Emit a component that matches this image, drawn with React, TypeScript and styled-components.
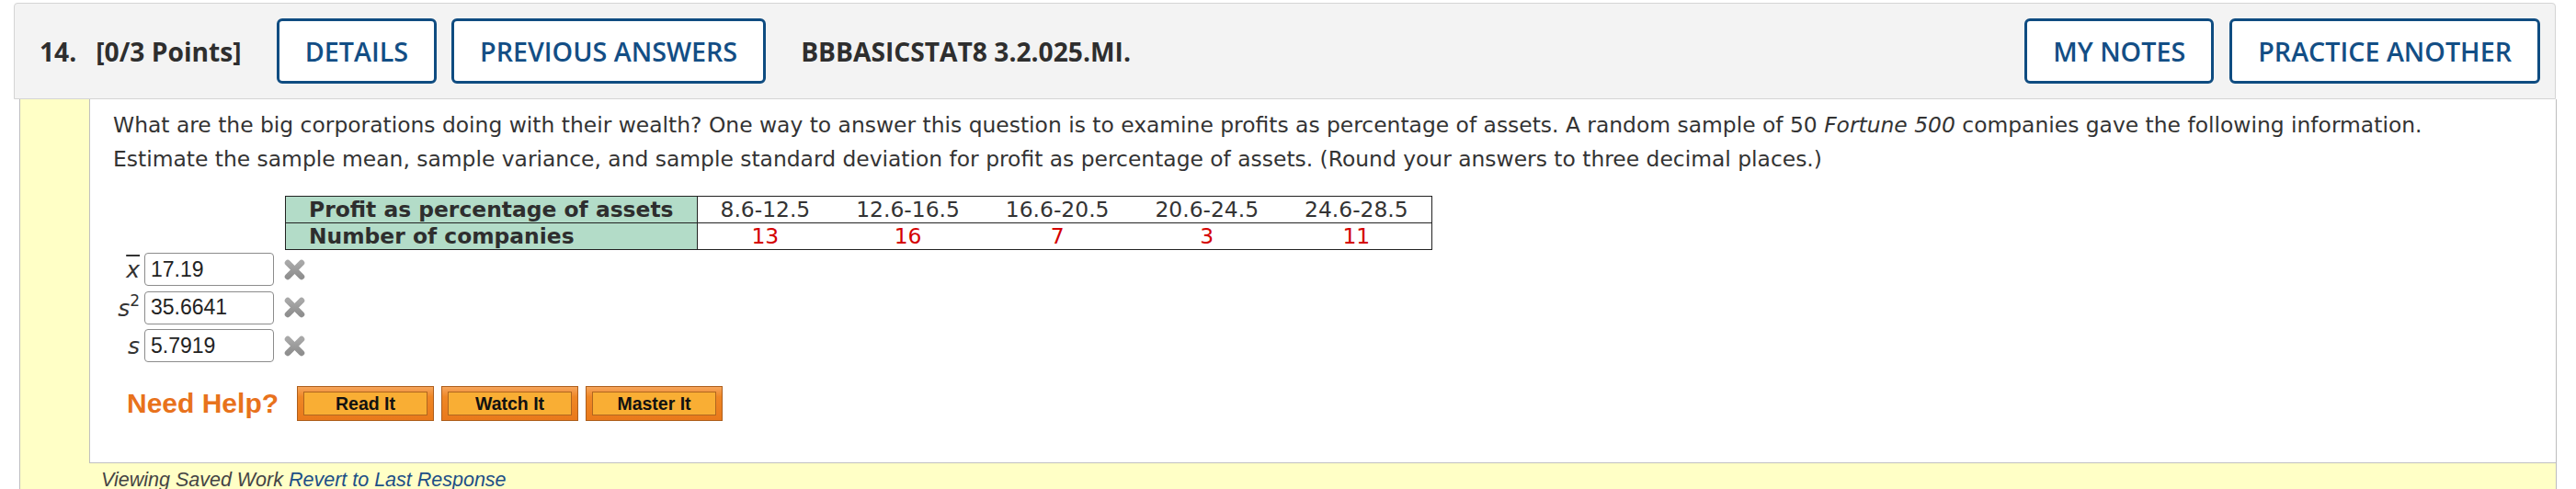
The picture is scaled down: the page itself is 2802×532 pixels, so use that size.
import React from 'react';
import styled, { createGlobalStyle } from 'styled-components';

const GlobalStyle = createGlobalStyle`
  html, body {
    margin: 0;
    padding: 0;
    background: #ffffff;
  }
`;

const Page = styled.div`
  width: 2765px;
  padding: 3px 0 0 15px;
`;

const Header = styled.header`
  display: flex;
  align-items: center;
  height: 105px;
  box-sizing: border-box;
  padding: 0 16px 0 27px;
  background: #f3f3f3;
  border: 1px solid #d4d4d4;
  border-radius: 4px 4px 0 0;
  font-family: "Open Sans", "Liberation Sans", sans-serif;
`;

const HeaderText = styled.span<{ $gap?: number }>`
  margin-left: ${({ $gap }) => $gap ?? 0}px;
  font-size: 28.2px;
  font-weight: 700;
  color: #2e2e2e;
  white-space: nowrap;
`;

const OutlineButton = styled.button<{ $gap?: number }>`
  height: 71px;
  margin-left: ${({ $gap }) => $gap ?? 0}px;
  padding: 0 28px;
  box-sizing: border-box;
  background: #ffffff;
  border: 3px solid #0f4c81;
  border-radius: 6px;
  font-family: "Open Sans", "Liberation Sans", sans-serif;
  font-size: 28.7px;
  font-weight: 600;
  color: #134e85;
  white-space: nowrap;
  cursor: pointer;
`;

const Spacer = styled.div`
  flex: 1;
`;

const Body = styled.div`
  width: 2760px;
  margin-left: 6px;
  box-sizing: border-box;
  padding-left: 75px;
  background: #ffffc6;
  border-left: 1px solid #bdbdbd;
  border-right: 1px solid #bdbdbd;
`;

const Card = styled.div`
  background: #ffffff;
  border-left: 1px solid #c0c0c0;
  border-bottom: 1px solid #c0c0c0;
  padding: 10px 40px 45px 25px;
  font-family: "DejaVu Sans", Verdana, sans-serif;
  color: #333333;
`;

const Question = styled.p`
  margin: 0;
  font-size: 23.4px;
  line-height: 36.5px;
`;

const DataTable = styled.table`
  margin: 22px 0 0 187px;
  border-collapse: collapse;
  font-size: 23.4px;
  line-height: 28px;
`;

const LabelCell = styled.th`
  padding: 0 25px;
  text-align: left;
  font-weight: 700;
  color: #2e2e2e;
  background: #b3dcc8;
  border: 1px solid #222222;
  white-space: nowrap;
`;

const ValueCell = styled.td<{ $red?: boolean }>`
  padding: 0 25px;
  text-align: center;
  color: ${({ $red }) => ($red ? '#d40000' : '#333333')};
  border-top: 1px solid #222222;
  border-bottom: 1px solid #222222;
  white-space: nowrap;
  &:last-child {
    border-right: 1px solid #222222;
  }
`;

const Answers = styled.div`
  display: flex;
  flex-direction: column;
  gap: 5.5px;
  margin-top: 3px;
`;

const AnswerRow = styled.div`
  display: flex;
  align-items: center;
`;

const Symbol = styled.span`
  width: 29px;
  padding-top: 2px;
  text-align: right;
  font-family: "DejaVu Sans", Verdana, sans-serif;
  font-style: italic;
  font-size: 25px;
  line-height: 34px;
  color: #333333;
  white-space: nowrap;
`;

const Bar = styled.span`
  text-decoration: overline;
  text-decoration-thickness: 1.5px;
`;

const Sup = styled.sup`
  font-style: normal;
  font-size: 17px;
  vertical-align: 11px;
  line-height: 0;
`;

const AnswerInput = styled.input`
  width: 141px;
  height: 36px;
  margin-left: 5px;
  box-sizing: border-box;
  padding: 0 6px;
  border: 1px solid #8c8c8c;
  border-radius: 4px;
  font-family: "Liberation Sans", Arial, sans-serif;
  font-size: 23px;
  color: #222222;
  background: #ffffff;
`;

const Wrong = styled.svg`
  width: 25px;
  height: 25px;
  margin-left: 10px;
`;

const HelpRow = styled.div`
  display: flex;
  align-items: center;
  margin: 26px 0 0 15px;
`;

const HelpLabel = styled.span`
  margin-right: 20px;
  font-family: "Liberation Sans", Arial, sans-serif;
  font-size: 30px;
  font-weight: 700;
  color: #e8721c;
`;

const HelpButton = styled.button`
  width: 149px;
  height: 38px;
  margin-right: 8px;
  box-sizing: border-box;
  padding: 5px 6px;
  border: 1px solid #ad5e1c;
  background: linear-gradient(#f6a55c, #ef8725 30%, #e9791b);
  cursor: pointer;
`;

const HelpFace = styled.span`
  display: flex;
  align-items: center;
  justify-content: center;
  height: 100%;
  box-sizing: border-box;
  border: 1px solid #b0661f;
  background: #f9ae34;
  font-family: "Liberation Sans", Arial, sans-serif;
  font-size: 19.5px;
  font-weight: 700;
  color: #111111;
`;

const Footer = styled.div`
  padding: 6px 0 0 13px;
  font-family: "Liberation Sans", Arial, sans-serif;
  font-style: italic;
  font-size: 21.5px;
  line-height: 25px;
  color: #444444;
`;

const FooterLink = styled.a`
  color: #1d4f86;
  text-decoration: none;
`;

const ranges = ['8.6-12.5', '12.6-16.5', '16.6-20.5', '20.6-24.5', '24.6-28.5'];
const counts = ['13', '16', '7', '3', '11'];

function WrongMark() {
  return (
    <Wrong viewBox="0 0 25 25">
      <defs>
        <linearGradient id="xg" x1="0" y1="0" x2="0" y2="1">
          <stop offset="0" stopColor="#a8a8a8" />
          <stop offset="1" stopColor="#8f8f8f" />
        </linearGradient>
      </defs>
      <g stroke="url(#xg)" strokeWidth="6.5" strokeLinecap="round">
        <line x1="5" y1="5" x2="20" y2="20" />
        <line x1="20" y1="5" x2="5" y2="20" />
      </g>
    </Wrong>
  );
}

export default function App() {
  return (
    <Page>
      <GlobalStyle />
      <Header>
        <HeaderText>14.</HeaderText>
        <HeaderText $gap={21}>[0/3 Points]</HeaderText>
        <OutlineButton $gap={38}>DETAILS</OutlineButton>
        <OutlineButton $gap={16}>PREVIOUS ANSWERS</OutlineButton>
        <HeaderText $gap={38}>BBBASICSTAT8 3.2.025.MI.</HeaderText>
        <Spacer />
        <OutlineButton>MY NOTES</OutlineButton>
        <OutlineButton $gap={17}>PRACTICE ANOTHER</OutlineButton>
      </Header>
      <Body>
        <Card>
          <Question>
            What are the big corporations doing with their wealth? One way to answer this question is to
            examine profits as percentage of assets. A random sample of 50 <i>Fortune 500</i> companies gave
            the following information.
            <br />
            Estimate the sample mean, sample variance, and sample standard deviation for profit as percentage
            of assets. (Round your answers to three decimal places.)
          </Question>
          <DataTable>
            <tbody>
              <tr>
                <LabelCell>Profit as percentage of assets</LabelCell>
                {ranges.map((r) => (
                  <ValueCell key={r}>{r}</ValueCell>
                ))}
              </tr>
              <tr>
                <LabelCell>Number of companies</LabelCell>
                {counts.map((c, i) => (
                  <ValueCell key={i} $red>
                    {c}
                  </ValueCell>
                ))}
              </tr>
            </tbody>
          </DataTable>
          <Answers>
            <AnswerRow>
              <Symbol>
                <Bar>x</Bar>
              </Symbol>
              <AnswerInput defaultValue="17.19" />
              <WrongMark />
            </AnswerRow>
            <AnswerRow>
              <Symbol>
                s<Sup>2</Sup>
              </Symbol>
              <AnswerInput defaultValue="35.6641" />
              <WrongMark />
            </AnswerRow>
            <AnswerRow>
              <Symbol>s</Symbol>
              <AnswerInput defaultValue="5.7919" />
              <WrongMark />
            </AnswerRow>
          </Answers>
          <HelpRow>
            <HelpLabel>Need Help?</HelpLabel>
            <HelpButton>
              <HelpFace>Read It</HelpFace>
            </HelpButton>
            <HelpButton>
              <HelpFace>Watch It</HelpFace>
            </HelpButton>
            <HelpButton>
              <HelpFace>Master It</HelpFace>
            </HelpButton>
          </HelpRow>
        </Card>
        <Footer>
          Viewing Saved Work <FooterLink href="#">Revert to Last Response</FooterLink>
        </Footer>
      </Body>
    </Page>
  );
}
